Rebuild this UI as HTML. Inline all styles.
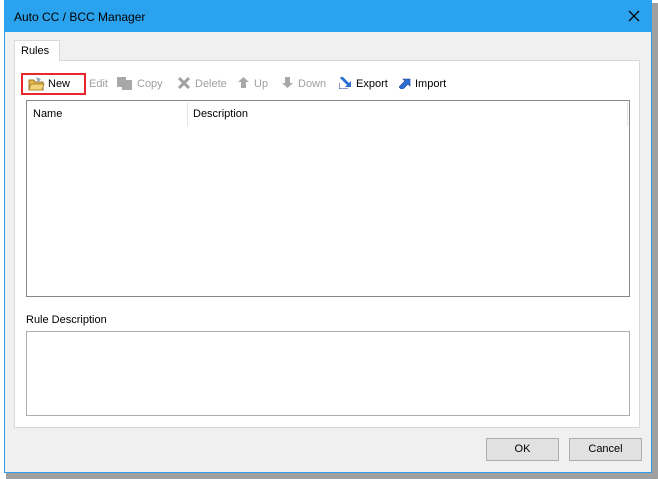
<html><head><style>
body{margin:0;width:658px;height:479px;background:#fff;font-family:"Liberation Sans",sans-serif;font-size:11px;position:relative;overflow:hidden}
.a{position:absolute}
</style></head><body>
<div class="a" style="left:6px;top:3px;width:652px;height:476px;background:#a0a0a0"></div>
<div class="a" style="left:4px;top:0;width:648px;height:473px;background:#f0f0f0;border:1px solid #2a9fe8;box-sizing:border-box"></div>
<div class="a" style="left:4px;top:0;width:648px;height:32px;background:#2aa2ee"></div>
<div class="a" style="left:14px;top:10px;font-size:12px;color:#000">Auto CC / BCC Manager</div>
<svg class="a" style="left:627px;top:9px" width="14" height="14"><path d="M2 2L12 12M12 2L2 12" stroke="#000" stroke-width="1.3"/></svg>
<div class="a" style="left:14px;top:60px;width:626px;height:368px;background:#fff;border:1px solid #d9d9d9;box-sizing:border-box"></div>
<div class="a" style="left:14px;top:40px;width:46px;height:21px;background:#fff;border:1px solid #d9d9d9;border-bottom:none;box-sizing:border-box"></div>
<div class="a" style="left:21px;top:45px">Rules</div>
<div class="a" style="left:21px;top:73px;width:65px;height:22px;border:2px solid #e8262b;box-sizing:border-box"></div>
<svg class="a" style="left:28px;top:76px" width="17" height="15"><path d="M1 4h5l1 2h8v8H1z" fill="#e9b84d" stroke="#9a7a2a"/><path d="M8 1l5 2-3 4z" fill="#9ab"/><path d="M3 8h13l-2 6H1z" fill="#f6d57a" stroke="#a88a30"/></svg>
<div class="a" style="left:48px;top:78px">New</div>
<div class="a" style="left:89px;top:78px;color:#a0a0a0">Edit</div>
<svg class="a" style="left:117px;top:76px" width="16" height="14"><rect x="0" y="1" width="9" height="10" fill="#a8a8a8"/><rect x="5" y="4" width="10" height="10" fill="#a8a8a8"/></svg>
<div class="a" style="left:137px;top:78px;color:#a0a0a0">Copy</div>
<svg class="a" style="left:177px;top:76px" width="14" height="14"><path d="M2 2L12 12M12 2L2 12" stroke="#a0a0a0" stroke-width="3"/></svg>
<div class="a" style="left:195px;top:78px;color:#a0a0a0">Delete</div>
<svg class="a" style="left:238px;top:77px" width="11" height="11"><path d="M5.5 0L11 5H8v6H3V5H0z" fill="#a8a8a8"/></svg>
<div class="a" style="left:254px;top:78px;color:#a0a0a0">Up</div>
<svg class="a" style="left:282px;top:77px" width="11" height="11"><path d="M5.5 11L11 6H8V0H3v6H0z" fill="#a8a8a8"/></svg>
<div class="a" style="left:298px;top:78px;color:#a0a0a0">Down</div>
<svg class="a" style="left:339px;top:77px" width="13" height="12"><path d="M1 1l7 7-2 2h6V4l-2 2L3 -1z" fill="#2a6fd6"/><path d="M0 6v6h9" stroke="#1a3a8a" fill="none"/></svg>
<div class="a" style="left:356px;top:78px">Export</div>
<svg class="a" style="left:399px;top:77px" width="12" height="12"><path d="M0 10l6-6-2-2h7v7l-2-2-6 6z" fill="#2a6fd6" stroke="#1a3a8a" stroke-width=".6"/></svg>
<div class="a" style="left:415px;top:78px">Import</div>
<div class="a" style="left:26px;top:100px;width:604px;height:197px;border:1px solid #828790;box-sizing:border-box;background:#fff"></div>
<div class="a" style="left:187px;top:102px;width:1px;height:24px;background:#e5e5e5"></div>
<div class="a" style="left:627px;top:102px;width:1px;height:24px;background:#e5e5e5"></div>
<div class="a" style="left:33px;top:108px">Name</div>
<div class="a" style="left:193px;top:108px">Description</div>
<div class="a" style="left:26px;top:314px">Rule Description</div>
<div class="a" style="left:26px;top:331px;width:604px;height:85px;border:1px solid #adadad;box-sizing:border-box;background:#fff"></div>
<div class="a" style="left:486px;top:438px;width:73px;height:23px;border:1px solid #adadad;background:#e1e1e1;box-sizing:border-box;text-align:center;line-height:21px">OK</div>
<div class="a" style="left:569px;top:438px;width:73px;height:23px;border:1px solid #adadad;background:#e1e1e1;box-sizing:border-box;text-align:center;line-height:21px">Cancel</div>
</body></html>
